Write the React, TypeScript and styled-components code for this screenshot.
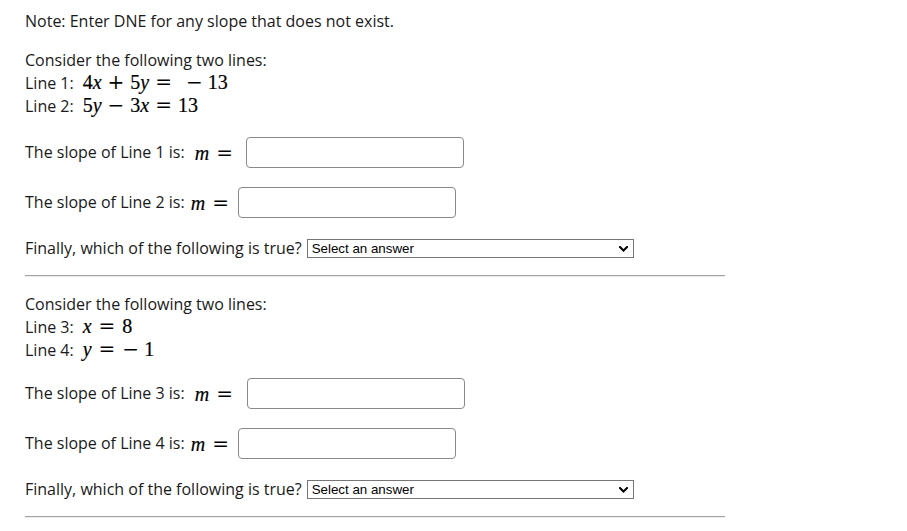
import React from "react";
import styled, { createGlobalStyle } from "styled-components";

const GlobalStyle = createGlobalStyle`
  html, body { margin: 0; padding: 0; background: #ffffff; }
  body {
    font-family: "Open Sans", "Liberation Sans", sans-serif;
    font-size: 16px;
    color: #1a1a1a;
  }
`;

const Page = styled.main`
  padding: 10px 0 20px 25px;
  width: 700px;
`;

const Note = styled.p`
  margin: 0;
  line-height: 23px;
`;

const Problem = styled.section<{ $top: number }>`
  margin-top: ${(p) => p.$top}px;
  display: flex;
  flex-direction: column;
`;

const TextLine = styled.div`
  line-height: 23px;
  height: 23px;
  white-space: nowrap;
`;

const FieldRow = styled.div<{ $top: number }>`
  display: flex;
  align-items: center;
  height: 31px;
  margin-top: ${(p) => p.$top}px;
  line-height: 23px;
  white-space: nowrap;
`;

const AnswerInput = styled.input<{ $gap: number }>`
  box-sizing: border-box;
  width: 218px;
  height: 31px;
  margin: 0 0 0 ${(p) => p.$gap}px;
  padding: 0 6px;
  border: 1px solid #8a8a8a;
  border-radius: 4px;
  background: #ffffff;
  font: 16px "Open Sans", sans-serif;
  outline: none;
`;

const ChoiceRow = styled.div`
  display: flex;
  align-items: center;
  height: 23px;
  margin-top: 19px;
  line-height: 23px;
  white-space: nowrap;
`;

const SelectWrap = styled.span`
  position: relative;
  display: inline-flex;
  margin-left: 5px;
`;

const AnswerSelect = styled.select`
  appearance: none;
  -webkit-appearance: none;
  box-sizing: border-box;
  width: 327px;
  height: 19px;
  margin: 0;
  padding: 0 20px 0 4px;
  border: 1px solid #767676;
  border-radius: 0;
  background: #ffffff;
  color: #000000;
  font: 13.333px "Liberation Sans", Arial, sans-serif;
  line-height: 17px;
  outline: none;
`;

const Chevron = styled.svg`
  position: absolute;
  right: 6px;
  top: 50%;
  transform: translateY(-50%);
  pointer-events: none;
`;

const Divider = styled.hr`
  box-sizing: border-box;
  width: 700px;
  height: 2px;
  margin: 15px 0 0;
  border: 0;
  border-top: 1px solid #a2a2a2;
  border-bottom: 1px solid #ededed;
`;

const MathSpan = styled.span<{ $lead: number }>`
  display: inline-block;
  margin-left: ${(p) => p.$lead}px;
  font-family: "Liberation Serif", "Times New Roman", serif;
  font-size: 20px;
  line-height: 1;
  color: #000000;
  -webkit-text-stroke: 0.2px #000000;
  white-space: nowrap;
`;

const MI = styled.i`
  font-style: italic;
`;

const MN = styled.span``;

const MO = styled.span<{ $l?: number; $r?: number }>`
  font-family: "DejaVu Serif", serif;
  font-size: 20px;
  line-height: 1;
  -webkit-text-stroke: 0;
  margin: 0 ${(p) => p.$r ?? 6}px 0 ${(p) => p.$l ?? 6}px;
`;

function SelectAnswer() {
  return (
    <SelectWrap>
      <AnswerSelect defaultValue="">
        <option value="">Select an answer</option>
        <option value="parallel">These lines are parallel</option>
        <option value="perpendicular">These lines are perpendicular</option>
        <option value="neither">These lines are neither parallel nor perpendicular</option>
      </AnswerSelect>
      <Chevron width="9" height="6" viewBox="0 0 9 6" aria-hidden="true">
        <path d="M1 1 L4.5 4.5 L8 1" fill="none" stroke="#000" strokeWidth="2" strokeLinecap="square" />
      </Chevron>
    </SelectWrap>
  );
}

function SlopeRow(props: { line: number; top: number; lead: number; gap: number }) {
  return (
    <FieldRow $top={props.top}>
      The slope of Line {props.line} is:
      <MathSpan $lead={props.lead}>
        <MI>m</MI>
        <MO $l={7} $r={0}>=</MO>
      </MathSpan>
      <AnswerInput $gap={props.gap} type="text" aria-label={`slope of line ${props.line}`} />
    </FieldRow>
  );
}

export default function App() {
  return (
    <>
      <GlobalStyle />
      <Page>
        <Note>Note: Enter DNE for any slope that does not exist.</Note>

        <Problem $top={16}>
          <TextLine>Consider the following two lines:</TextLine>
          <TextLine>
            Line 1:
            <MathSpan $lead={9}>
              <MN>4</MN>
              <MI>x</MI>
              <MO>+</MO>
              <MN>5</MN>
              <MI>y</MI>
              <MO>=</MO>
              <MO $l={8} $r={5}>−</MO>
              <MN>13</MN>
            </MathSpan>
          </TextLine>
          <TextLine>
            Line 2:
            <MathSpan $lead={9}>
              <MN>5</MN>
              <MI>y</MI>
              <MO>−</MO>
              <MN>3</MN>
              <MI>x</MI>
              <MO>=</MO>
              <MN>13</MN>
            </MathSpan>
          </TextLine>
          <SlopeRow line={1} top={19} lead={10} gap={13} />
          <SlopeRow line={2} top={19} lead={6} gap={9} />
          <ChoiceRow>
            Finally, which of the following is true?
            <SelectAnswer />
          </ChoiceRow>
          <Divider />
        </Problem>

        <Problem $top={16}>
          <TextLine>Consider the following two lines:</TextLine>
          <TextLine>
            Line 3:
            <MathSpan $lead={9}>
              <MI>x</MI>
              <MO $l={7} $r={7}>=</MO>
              <MN>8</MN>
            </MathSpan>
          </TextLine>
          <TextLine>
            Line 4:
            <MathSpan $lead={9}>
              <MI>y</MI>
              <MO $l={7} $r={4}>=</MO>
              <MO $l={3} $r={5}>−</MO>
              <MN>1</MN>
            </MathSpan>
          </TextLine>
          <SlopeRow line={3} top={16} lead={10} gap={14} />
          <SlopeRow line={4} top={19} lead={6} gap={9} />
          <ChoiceRow>
            Finally, which of the following is true?
            <SelectAnswer />
          </ChoiceRow>
          <Divider />
        </Problem>
      </Page>
    </>
  );
}
